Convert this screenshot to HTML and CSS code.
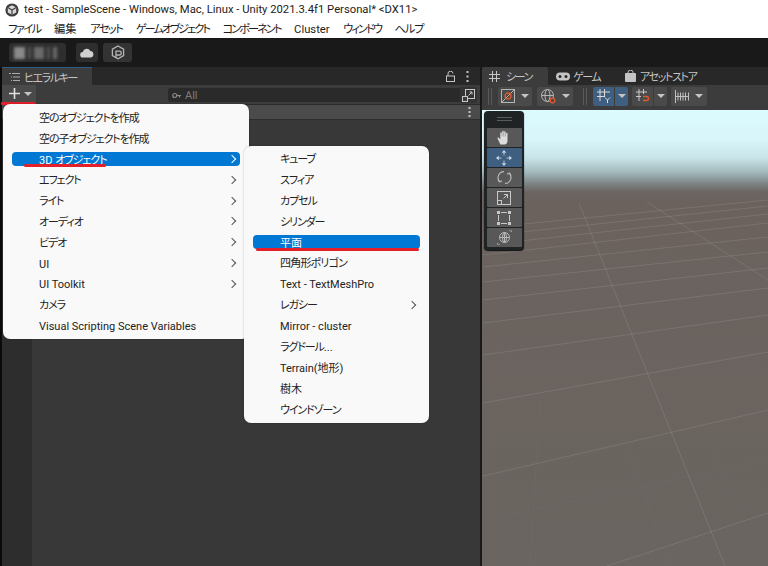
FILE: index.html
```html
<!DOCTYPE html>
<html lang="ja">
<head>
<meta charset="utf-8">
<title>Unity</title>
<link rel="stylesheet" href="styles.css">
</head>
<body>
<div class="app">
  <header class="titlebar">
    <svg class="logo" viewBox="0 0 14 14"><circle cx="7" cy="7" r="6.6" fill="#3d3d3d"/><path d="M7 2.2 11.2 4.6v4.8L7 11.8 2.8 9.4V4.6z" fill="#d8d8d8"/><path d="M7 7V11.8M7 7 2.8 4.6M7 7l4.2-2.4" stroke="#3d3d3d" stroke-width="1.2" fill="none"/></svg>
    <span>test - SampleScene - Windows, Mac, Linux - Unity 2021.3.4f1 Personal* &lt;DX11&gt;</span>
  </header>
  <nav class="menubar">
    <span class="jm">ファイル</span><span>編集</span><span class="jm">アセット</span><span class="jn">ゲームオブジェクト</span><span class="jn">コンポーネント</span><span>Cluster</span><span class="jn">ウィンドウ</span><span class="ja">ヘルプ</span>
  </nav>
  <div class="maintoolbar">
    <div class="tbtn account">
      <i class="px p1"></i><i class="px p2"></i><i class="px p3"></i><i class="px p4"></i><i class="px p5"></i>
    </div>
    <div class="tbtn cloud">
      <svg width="14" height="10" viewBox="0 0 14 10"><path d="M3.2 9.5a2.8 2.8 0 0 1-.4-5.6A4 4 0 0 1 10.3 3a3.3 3.3 0 0 1 .6 6.5z" fill="#d0d0d0"/></svg>
    </div>
    <div class="tbtn collab">
      <svg width="14" height="15" viewBox="0 0 14 15" fill="none" stroke="#b4b4b4" stroke-width="1.3"><path d="M7 1 12.6 4.2v6.4L7 13.8 1.4 10.6V4.2z"/><path d="M5 13V6.2h3.4a1.9 1.9 0 0 1 0 3.8H5"/></svg>
    </div>
  </div>
  <main class="workspace">
    <section class="hierarchy">
      <div class="tabrow">
        <div class="tab tab-hier">
          <svg width="11" height="8" viewBox="0 0 11 8" stroke="#aaa" stroke-width="1"><path d="M0 .5h2M3 .5h8M2 4h1M4 4h7M2 7.5h1M4 7.5h7"/></svg>
          <span class="ja-s">ヒエラルキー</span>
        </div>
        <div class="tabtools">
          <svg width="10" height="11" viewBox="0 0 10 11" fill="none" stroke="#c4c4c4" stroke-width="1"><rect x=".5" y="5" width="8" height="5.5"/><path d="M2 5V3a2.5 2.5 0 0 1 5-.6"/></svg>
          <svg class="dots" width="3" height="11" viewBox="0 0 3 11" fill="#c4c4c4"><rect x=".5" y="0" width="2" height="2"/><rect x=".5" y="4.500" width="2" height="2"/><rect x=".5" y="9" width="2" height="2"/></svg>
        </div>
      </div>
      <div class="hiertools">
        <div class="addbtn">
          <svg width="13" height="13" viewBox="0 0 13 13" stroke="#e0e0e0" stroke-width="1.6"><path d="M6.500 1v11M1 6.500h11"/></svg>
          <i class="caret"></i>
        </div>
        <div class="search">
          <svg width="10" height="7" viewBox="0 0 10 7" fill="none" stroke="#8c8c8c" stroke-width="1.2"><circle cx="2.800" cy="3.500" r="2"/><path d="M5 3.500h4M7.500 3.500v2"/></svg>
          <span>All</span>
        </div>
        <div class="searchbtn">
          <svg width="13" height="13" viewBox="0 0 13 13" fill="none" stroke="#c8c8c8" stroke-width="1"><rect x="3.500" y=".5" width="9" height="9"/><rect x=".5" y="7.500" width="5" height="5" fill="#3c3c3c"/><path d="M6.500 6.500 10 3M7.500 3H10v2.500"/></svg>
        </div>
      </div>
      <div class="scenerow">
        <svg width="3" height="10" viewBox="0 0 3 10" fill="#c4c4c4"><rect x=".5" y="0" width="2" height="2"/><rect x=".5" y="4" width="2" height="2"/><rect x=".5" y="8" width="2" height="2"/></svg>
      </div>
      <div class="hierbody"><div class="gutter"></div></div>
    </section>

    <section class="sceneview">
      <div class="tabrow">
        <div class="tab tab-scene">
          <svg width="11" height="11" viewBox="0 0 11 11" stroke="#c8c8c8" stroke-width="1"><path d="M3.500 0v11M7.500 0v11M0 3.500h11M0 7.500h11"/></svg>
          <span class="ja-s">シーン</span>
        </div>
        <div class="tab2 tab-game">
          <svg width="14" height="9" viewBox="0 0 14 9"><rect width="14" height="8" y=".5" rx="4" fill="#c4c4c4"/><circle cx="4" cy="4.500" r="1.500" fill="#282828"/><circle cx="10" cy="4.500" r="1.500" fill="#282828"/></svg>
          <span class="ja-s">ゲーム</span>
        </div>
        <div class="tab2 tab-store">
          <svg width="11" height="12" viewBox="0 0 11 12"><rect y="3" width="11" height="9" rx="1" fill="#c4c4c4"/><path d="M3 4V2.200a2.500 2 0 0 1 5 0V4" fill="none" stroke="#c4c4c4"/></svg>
          <span class="ja-s">アセットストア</span>
        </div>
      </div>
      <div class="scenetools">
        <i class="grip"></i>
        <div class="sbtn s-draw">
          <svg width="14" height="14" viewBox="0 0 14 14" fill="none"><rect x=".5" y=".5" width="13" height="13" stroke="#b5b5b5"/><path d="M1 13 13 1" stroke="#b5b5b5"/><circle cx="7" cy="7" r="3" stroke="#e0592a" stroke-width="1.300"/></svg>
          <i class="caret"></i>
        </div>
        <div class="sbtn s-globe">
          <svg width="15" height="15" viewBox="0 0 15 15" fill="none" stroke="#b5b5b5"><circle cx="6.500" cy="6.500" r="6"/><ellipse cx="6.500" cy="6.500" rx="2.500" ry="6"/><path d="M.5 6.500h12"/><circle cx="11.500" cy="11.500" r="2.300" fill="#4a4a4a" stroke="#e0592a" stroke-width="1.300"/></svg>
          <i class="caret"></i>
        </div>
        <i class="grip grip2"></i>
        <div class="split">
          <div class="sbtn s-grid on">
            <svg width="14" height="14" viewBox="0 0 14 14" fill="none" stroke="#dcdcdc"><path d="M3 0v12M7.500 0v8M0 3h13M0 7.500h8M8 8.500l2.500 2.500 2.500-2.500M10.500 11v3"/></svg>
          </div>
          <div class="sbtn s-arrow on"><i class="caret"></i></div>
        </div>
        <div class="split">
          <div class="sbtn s-grid">
            <svg width="14" height="14" viewBox="0 0 14 14" fill="none" stroke="#c8c8c8"><path d="M3 0v12M7.500 0v5M0 3h11M0 7.500h5"/><path d="M7 7.500h3.500a2 2 0 0 1 0 4H7" stroke="#e0592a" stroke-width="1.500"/></svg>
          </div>
          <div class="sbtn s-arrow"><i class="caret"></i></div>
        </div>
        <div class="sbtn s-inc">
          <svg width="14" height="13" viewBox="0 0 14 13" stroke="#c0c0c0"><path d="M.5 0v13M3 2.500v8M5.500 2.500v8M8 2.500v8M10.500 2.500v8M13.500 2.500v8M.5 6.500h13"/></svg>
          <i class="caret"></i>
        </div>
      </div>
      <div class="canvas">
        <svg class="grid" viewBox="482 110 286 456" fill="none">
          <g stroke="#fff" stroke-opacity=".1" stroke-width="1">
            <path d="M579 203 725 566M647 202 768 280"/>
            <path d="M483 403 768 352M483 476 768 410M607 566 768 513M483 355 768 315M483 323 768 288M483 300 768 268M483 282 768 252M483 267 768 237M483 255 768 223M483 245 768 214M483 236 768 206M483 228 768 200"/>
          </g>
          <g stroke="#fff" stroke-opacity=".025" stroke-width="1">
            <path d="M540 400 530 566M625 440 670 566M700 420 752 540M483 520 768 460"/>
          </g>
        </svg>
        <div class="gizmos">
          <div class="gizgrip"><i></i><i></i></div>
          <div class="giz">
            <svg width="15" height="15" viewBox="0 0 15 15" fill="#dcdcdc"><path d="M3.400 14.500 .6 8.600c-.4-.9.8-1.500 1.400-.7l1.300 1.700V3c0-1 1.500-1 1.500 0v3.500h.4V1.400c0-1 1.500-1 1.500 0v5.100h.4V2c0-1 1.500-1 1.500 0v4.600h.4V3.400c0-1 1.500-1 1.500 0v7.300c0 2-1.300 3.800-3 3.800z"/></svg>
          </div>
          <div class="giz on">
            <svg width="16" height="16" viewBox="0 0 16 16" fill="#cfdceb"><path d="M8 0 10.200 2.800H5.800zM8 16l2.200-2.800H5.800zM0 8l2.800-2.200v4.400zM16 8l-2.800-2.200v4.400z"/><path d="M8 3v10M3 8h10" stroke="#cfdceb" stroke-width=".8" stroke-dasharray="2.500 5"/></svg>
          </div>
          <div class="giz">
            <svg width="15" height="15" viewBox="0 0 15 15" fill="none" stroke="#bdbdbd" stroke-width="1.100"><path d="M2.500 11.500A6 6 0 0 1 7 1.600M12.500 3.500A6 6 0 0 1 8 13.400"/><path d="M1 9.500l1.500 2.500 2.500-1.200M14 5.500l-1.500-2.500L10 4.200"/></svg>
          </div>
          <div class="giz">
            <svg width="14" height="14" viewBox="0 0 14 14" fill="none" stroke="#c8c8c8"><rect x=".5" y=".5" width="13" height="13"/><rect x=".5" y="9.500" width="4" height="4"/><path d="M6.500 7.500 10.500 3.500M7 3.500h3.500V7"/></svg>
          </div>
          <div class="giz">
            <svg width="14" height="14" viewBox="0 0 14 14" fill="#c8c8c8"><rect width="3" height="3"/><rect x="11" width="3" height="3"/><rect y="11" width="3" height="3"/><rect x="11" y="11" width="3" height="3"/><path d="M4 1.500h6M4 12.500h6M1.500 4v6M12.500 4v6" stroke="#c8c8c8"/></svg>
          </div>
          <div class="giz">
            <svg width="15" height="15" viewBox="0 0 15 15" fill="none" stroke="#b8b8b8"><circle cx="7.500" cy="7.500" r="5"/><ellipse cx="7.500" cy="7.500" rx="2" ry="5"/><path d="M2.500 7.500h10M7.500 2.500v10"/><path d="M12 0l2.500.5-.5 2.500M3 15 .5 14.500 1 12" stroke-dasharray="1.500 1"/></svg>
          </div>
        </div>
      </div>
    </section>
  </main>

  <i class="redline r-add"></i>

  <div class="menu menu-main">
    <div class="item ja">空のオブジェクトを作成</div>
    <div class="item ja">空の子オブジェクトを作成</div>
    <div class="item sel sub">3D <span class="ja">オブジェクト</span></div>
    <div class="item sub ja">エフェクト</div>
    <div class="item sub ja">ライト</div>
    <div class="item sub ja">オーディオ</div>
    <div class="item sub ja">ビデオ</div>
    <div class="item sub">UI</div>
    <div class="item sub">UI Toolkit</div>
    <div class="item ja">カメラ</div>
    <div class="item">Visual Scripting Scene Variables</div>
  </div>
  <i class="redline r-3d"></i>

  <div class="menu menu-sub">
    <div class="item ja">キューブ</div>
    <div class="item ja">スフィア</div>
    <div class="item ja">カプセル</div>
    <div class="item ja">シリンダー</div>
    <div class="item sel">平面</div>
    <div class="item ja-s">四角形ポリゴン</div>
    <div class="item">Text - TextMeshPro</div>
    <div class="item sub ja">レガシー</div>
    <div class="item">Mirror - cluster</div>
    <div class="item"><span class="ja">ラグドール</span>...</div>
    <div class="item">Terrain(地形)</div>
    <div class="item">樹木</div>
    <div class="item ja">ウインドゾーン</div>
  </div>
  <i class="redline r-plane"></i>
</div>
</body>
</html>
```
FILE: styles.css
```css
* { box-sizing: border-box; }
html, body { margin: 0; height: 100%; overflow: hidden; }
body {
  font-family: Roboto, "Noto Sans CJK JP", sans-serif;
  font-feature-settings: "palt";
  font-size: 11px;
  background: #191919;
}
i { display: block; }
.ja { letter-spacing: -1.1px; }
.ja-s { letter-spacing: -.8px; }
.jm { letter-spacing: -1.6px; }
.jn { letter-spacing: -2px; }
.app { position: relative; width: 768px; height: 566px; display: flex; flex-direction: column; }

.titlebar {
  height: 19px; background: #fff; color: #1c1c1c;
  display: flex; align-items: center; gap: 5px; padding-left: 5px;
  font-size: 11.25px;
}
.logo { width: 14px; height: 14px; }
.menubar {
  height: 19px; background: #fff; color: #1c1c1c;
  display: flex; align-items: center; gap: 13.5px; padding: 1px 0 0 8px;
  font-size: 11.25px; line-height: 19px;
}

.maintoolbar {
  height: 29px; background: #191919;
  display: flex; align-items: center; gap: 5px; padding: 0 0 0 9px;
  flex: none;
}
.tbtn { height: 19px; border-radius: 3px; background: #2e2e2e; display: flex; align-items: center; justify-content: center; }
.account { width: 57px; gap: 3px; justify-content: flex-start; padding-left: 5px; margin-right: 5px; }
.cloud { width: 22px; }
.collab { width: 29px; background: #333; }
.px { height: 12px; background: #6a6a6a; filter: blur(1.5px); }
.p1 { width: 11px; background: #8a8a8a; }
.p2 { width: 3px; background: #555; }
.p3 { width: 10px; }
.p4 { width: 3px; background: #555; }
.p5 { width: 4px; }

.workspace { flex: 1; display: flex; min-height: 0; border-left: 2px solid #0a0a0a; gap: 2px; }
.hierarchy { width: 478px; display: flex; flex-direction: column; flex: none; background: #383838; }
.sceneview { flex: 1; display: flex; flex-direction: column; min-width: 0; }

.tabrow { height: 18px; background: #282828; display: flex; align-items: stretch; flex: none; color: #c4c4c4; font-size: 11px; }
.tabrow .ja-s { letter-spacing: -1.4px; }
.tab { background: #3c3c3c; display: flex; align-items: center; gap: 4px; }
.tab-hier { width: 90px; padding-left: 7px; border-top: 1px solid #2c5d87; }
.tabtools { margin-left: auto; display: flex; align-items: center; gap: 10px; padding-right: 11px; }
.hiertools { height: 20px; background: #3c3c3c; display: flex; align-items: flex-start; flex: none; border-bottom: 1px solid #2a2a2a; }
.addbtn { width: 34px; height: 17px; background: #4a4a4a; display: flex; align-items: center; gap: 3px; padding-left: 6px; }
.caret { width: 0; height: 0; border-left: 4px solid transparent; border-right: 4px solid transparent; border-top: 4px solid #c4c4c4; }
.search { width: 292px; height: 14px; margin: 3px 0 0 132px; background: #2a2a2a; border-radius: 3px 0 0 3px; display: flex; align-items: center; gap: 3px; padding-left: 4px; color: #7d7d7d; font-size: 11px; }
.searchbtn { width: 17px; height: 16px; margin-top: 2px; background: #333; border-radius: 0 3px 3px 0; display: flex; align-items: center; justify-content: center; }
.scenerow { height: 15px; background: #4b4b4b; border-bottom: 1px solid #2e2e2e; display: flex; align-items: center; justify-content: flex-end; padding-right: 9px; flex: none; }
.hierbody { flex: 1; display: flex; }
.gutter { width: 30px; background: #2d2d2d; }

.tab-scene { width: 66px; padding-left: 7px; gap: 6px; border-radius: 2px 2px 0 0; }
.tab2 { display: flex; align-items: center; gap: 3px; }
.tab-game { width: 77px; padding-left: 8px; }
.tab-store { padding-left: 0; gap: 4px; }

.scenetools { height: 25px; background: #3c3c3c; display: flex; align-items: center; padding: 0 0 3px 6px; gap: 5px; flex: none; }
.grip { width: 4px; height: 17px; border-left: 1px solid #5a5a5a; border-right: 1px solid #5a5a5a; margin-right: 1px; }
.grip2 { margin: 0 1px 0 5px; }
.sbtn { height: 19px; background: #4a4a4a; border-radius: 2px; display: flex; align-items: center; gap: 6px; padding-left: 3px; }
.s-draw { width: 34px; }
.s-globe { width: 36px; padding-left: 4px; }
.split { display: flex; gap: 1px; }
.split + .split { margin-left: -1px; }
.s-grid { width: 21px; justify-content: center; padding: 0; border-radius: 2px 0 0 2px; }
.s-arrow { width: 13px; justify-content: center; padding: 0; border-radius: 0 2px 2px 0; }
.s-inc { width: 36px; padding-left: 4px; margin-left: -1px; }
.sbtn.on { background: #3f5f80; }

.canvas {
  flex: 1; position: relative; overflow: hidden;
  background: linear-gradient(#dcfbff 0, #d8f6fa 30px, #c8e4e8 48px, #a3babd 62px, #7c8284 74px, #6c6561 82px, #6b625e 92px, #6a6560 100%);
}
.grid { position: absolute; inset: 0; width: 100%; height: 100%; }
.gizmos {
  position: absolute; left: 2px; top: 1px; width: 40px; height: 139px;
  background: #202323; border-radius: 4px; padding: 0 2.5px;
  display: flex; flex-direction: column; gap: 1px;
  box-shadow: 0 1px 1px #111;
}
.gizgrip { height: 16px; display: flex; flex-direction: column; justify-content: center; gap: 2px; padding: 0 10px; }
.gizgrip i { height: 1px; background: #5a5d5d; }
.giz { height: 19px; background: #585858; display: flex; align-items: center; justify-content: center; border-radius: 1px; }
.giz.on { background: #3f5f80; }

.menu {
  position: absolute; background: #f9f9f9; border-radius: 7px;
  display: flex; flex-direction: column; gap: 6.9px;
  color: #222; font-size: 11px;
  box-shadow: 0 0 2px rgba(0,0,0,.25);
}
.menu-main { left: 3px; top: 104px; width: 246px; height: 235px; padding: 6px 9px; gap: 6.8px; }
.menu-sub { left: 244px; top: 146px; width: 185px; height: 277px; padding: 5px 9px; }
.item { height: 14px; line-height: 17px; padding-left: 27px; border-radius: 4px; position: relative; white-space: nowrap; flex: none; }
.sel { background: #0078d4; color: #fff; }
.sub::after {
  content: ""; position: absolute; right: 5px; top: 4.5px; width: 5px; height: 5px;
  border-top: 1.2px solid #555; border-right: 1.2px solid #555; transform: rotate(45deg);
}
.sel.sub::after { border-color: #fff; }

.redline { position: absolute; height: 3px; background: #e5202a; border-radius: 1.5px; }
.r-add { left: 1px; top: 102px; width: 35px; }
.r-3d { left: 24px; top: 164px; width: 82px; }
.r-plane { left: 256px; top: 248px; width: 163px; }
```
